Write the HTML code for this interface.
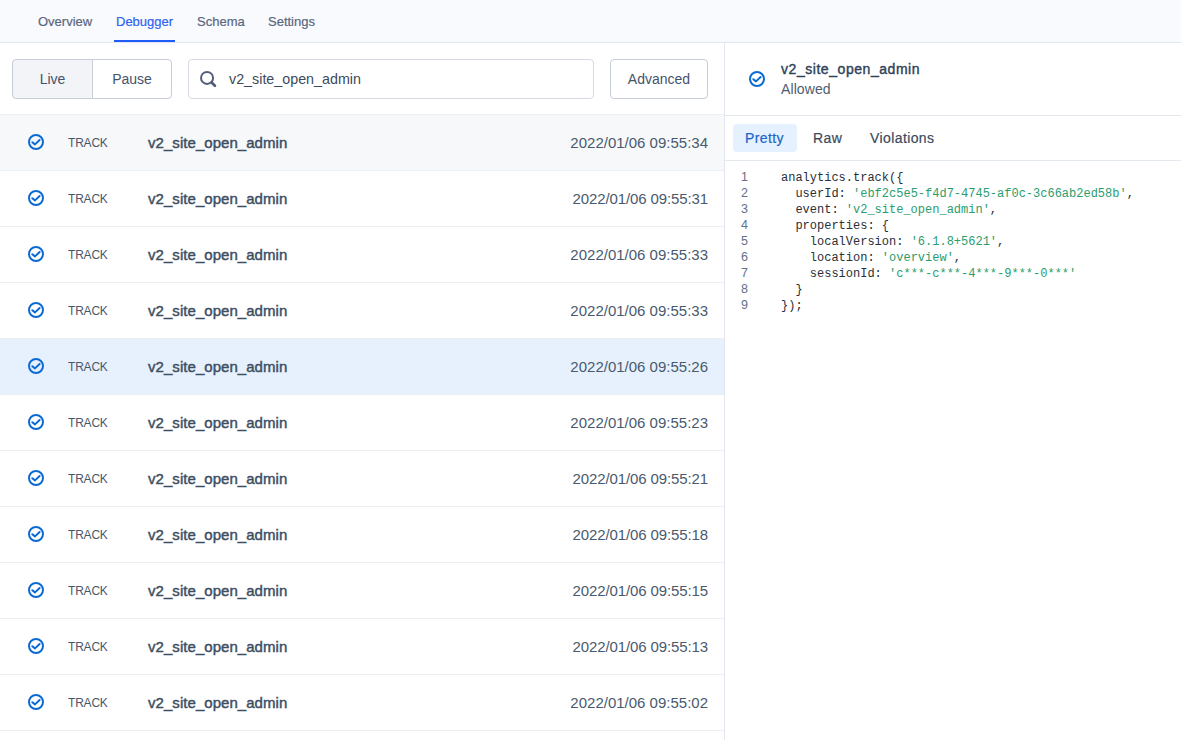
<!DOCTYPE html>
<html><head><meta charset="utf-8">
<style>
*{box-sizing:border-box;margin:0;padding:0}
html,body{width:1181px;height:740px;overflow:hidden;background:#fff;font-family:"Liberation Sans",sans-serif;color:#425466}
.nav{position:absolute;left:0;top:0;width:1181px;height:43px;background:#f9fafd;border-bottom:1px solid #e0e5f1}
.nav span{position:absolute;top:14px;font-size:13px;color:#596780;line-height:15px;-webkit-text-stroke:0.2px currentColor}
.nav .act{color:#2e63f2}
.nav .ul{position:absolute;left:114px;top:40px;width:61px;height:2px;background:#215cf6}
.vdiv{position:absolute;left:724px;top:43px;width:1px;height:697px;background:#e3e6f0}
.btn{position:absolute;top:59px;height:40px;border:1px solid #c6ccd8;font-size:14px;color:#45536a;line-height:38px;text-align:center;background:#fff}
.live{left:12px;width:81px;background:#f2f4f8;border-radius:4px 0 0 4px}
.pause{left:92px;width:80px;border-radius:0 4px 4px 0}
.adv{left:610px;width:98px;border-radius:4px}
.search{position:absolute;left:188px;top:59px;width:406px;height:40px;border:1px solid #d5dae3;border-radius:4px;background:#fff}
.sicon{position:absolute;left:10px;top:10px}
.stext{position:absolute;left:40px;top:10px;font-size:14.3px;line-height:18px;color:#3c4a5c}
.rowtop{position:absolute;left:0;top:114px;width:724px;height:1px;background:#ebeef2}
.row{position:absolute;left:0;width:724px;height:56px;border-bottom:1px solid #ebeef2}
.row .ty{position:absolute;left:68px;top:21px;font-size:12px;color:#48586c;line-height:14px;letter-spacing:-0.2px}
.row .nm{position:absolute;left:148px;top:19px;font-size:15px;color:#3d4e62;line-height:18px;letter-spacing:0.05px;-webkit-text-stroke:0.45px #3d4e62}
.row .ts{position:absolute;right:16px;top:19px;font-size:15px;color:#4a5a6e;line-height:18px}
.rp{position:absolute;left:725px;top:43px;width:456px;height:697px}
.rtitle{position:absolute;left:56px;top:18px;font-size:14px;color:#2e4259;line-height:17px;letter-spacing:0.55px;-webkit-text-stroke:0.4px #2e4259}
.rsub{position:absolute;left:56px;top:38px;font-size:14px;color:#4f5d73;line-height:17px;letter-spacing:0.1px}
.rhb{position:absolute;left:0;top:72px;width:456px;height:1px;background:#e3e8ee}
.tab{position:absolute;top:81px;height:28px;line-height:28px;font-size:14px;color:#3c4a5c;padding:0 12px;border-radius:4px;letter-spacing:0.4px;-webkit-text-stroke:0.2px currentColor}
.pretty{left:8px;width:64px;background:#e5f1fe;color:#1a66c9}
.raw{left:76px}
.viol{left:133px}
.tbb{position:absolute;left:0;top:117px;width:456px;height:1px;background:#e3e8ee}
.code{position:absolute;left:725px;top:169.5px;font-family:"Liberation Mono",monospace;font-size:12px;line-height:16px;color:#2a2f38}
.code div{position:relative;height:16px;white-space:pre}
.code .ln{position:absolute;left:16px;top:-1px;width:20px;color:#62718a;font-family:"Liberation Sans",sans-serif;font-size:12.5px}
.code .tx{position:absolute;left:56px}
.s{color:#2a9d6c}

</style></head><body>
<div class="nav">
  <span style="left:38px">Overview</span>
  <span class="act" style="left:116px">Debugger</span>
  <span style="left:197px">Schema</span>
  <span style="left:268px">Settings</span>
  <div class="ul"></div>
</div>
<div class="vdiv"></div>
<div class="bgroup">
<div class="btn live">Live</div>
<div class="btn pause">Pause</div>
</div>
<div class="search">
  <svg class="sicon" width="20" height="20" viewBox="0 0 20 20"><circle cx="8.05" cy="7.9" r="6" fill="none" stroke="#525d78" stroke-width="2"/><path d="M12.6 12.5L15.9 15.7" stroke="#525d78" stroke-width="2.7" stroke-linecap="round"/></svg>
  <span class="stext">v2_site_open_admin</span>
</div>
<div class="btn adv">Advanced</div>
<div class="rowtop"></div>
<div class="row" style="top:115px;background:#f7f8fa"><svg style="position:absolute;left:28px;top:19px" width="16" height="16" viewBox="0 0 16 16"><circle cx="8" cy="8" r="7" fill="none" stroke="#0b6bd3" stroke-width="2"/><path d="M4.3 8.2L7 10.4L11.6 6" fill="none" stroke="#0b6bd3" stroke-width="2" stroke-linecap="round" stroke-linejoin="round"/></svg><span class="ty">TRACK</span><span class="nm">v2_site_open_admin</span><span class="ts" style="letter-spacing:0px">2022/01/06 09:55:34</span></div>
<div class="row" style="top:171px;background:#fff"><svg style="position:absolute;left:28px;top:19px" width="16" height="16" viewBox="0 0 16 16"><circle cx="8" cy="8" r="7" fill="none" stroke="#0b6bd3" stroke-width="2"/><path d="M4.3 8.2L7 10.4L11.6 6" fill="none" stroke="#0b6bd3" stroke-width="2" stroke-linecap="round" stroke-linejoin="round"/></svg><span class="ty">TRACK</span><span class="nm">v2_site_open_admin</span><span class="ts" style="letter-spacing:-0.11px">2022/01/06 09:55:31</span></div>
<div class="row" style="top:227px;background:#fff"><svg style="position:absolute;left:28px;top:19px" width="16" height="16" viewBox="0 0 16 16"><circle cx="8" cy="8" r="7" fill="none" stroke="#0b6bd3" stroke-width="2"/><path d="M4.3 8.2L7 10.4L11.6 6" fill="none" stroke="#0b6bd3" stroke-width="2" stroke-linecap="round" stroke-linejoin="round"/></svg><span class="ty">TRACK</span><span class="nm">v2_site_open_admin</span><span class="ts" style="letter-spacing:0px">2022/01/06 09:55:33</span></div>
<div class="row" style="top:283px;background:#fff"><svg style="position:absolute;left:28px;top:19px" width="16" height="16" viewBox="0 0 16 16"><circle cx="8" cy="8" r="7" fill="none" stroke="#0b6bd3" stroke-width="2"/><path d="M4.3 8.2L7 10.4L11.6 6" fill="none" stroke="#0b6bd3" stroke-width="2" stroke-linecap="round" stroke-linejoin="round"/></svg><span class="ty">TRACK</span><span class="nm">v2_site_open_admin</span><span class="ts" style="letter-spacing:0px">2022/01/06 09:55:33</span></div>
<div class="row" style="top:339px;background:#e6f1fd"><svg style="position:absolute;left:28px;top:19px" width="16" height="16" viewBox="0 0 16 16"><circle cx="8" cy="8" r="7" fill="none" stroke="#0b6bd3" stroke-width="2"/><path d="M4.3 8.2L7 10.4L11.6 6" fill="none" stroke="#0b6bd3" stroke-width="2" stroke-linecap="round" stroke-linejoin="round"/></svg><span class="ty">TRACK</span><span class="nm">v2_site_open_admin</span><span class="ts" style="letter-spacing:0px">2022/01/06 09:55:26</span></div>
<div class="row" style="top:395px;background:#fff"><svg style="position:absolute;left:28px;top:19px" width="16" height="16" viewBox="0 0 16 16"><circle cx="8" cy="8" r="7" fill="none" stroke="#0b6bd3" stroke-width="2"/><path d="M4.3 8.2L7 10.4L11.6 6" fill="none" stroke="#0b6bd3" stroke-width="2" stroke-linecap="round" stroke-linejoin="round"/></svg><span class="ty">TRACK</span><span class="nm">v2_site_open_admin</span><span class="ts" style="letter-spacing:0px">2022/01/06 09:55:23</span></div>
<div class="row" style="top:451px;background:#fff"><svg style="position:absolute;left:28px;top:19px" width="16" height="16" viewBox="0 0 16 16"><circle cx="8" cy="8" r="7" fill="none" stroke="#0b6bd3" stroke-width="2"/><path d="M4.3 8.2L7 10.4L11.6 6" fill="none" stroke="#0b6bd3" stroke-width="2" stroke-linecap="round" stroke-linejoin="round"/></svg><span class="ty">TRACK</span><span class="nm">v2_site_open_admin</span><span class="ts" style="letter-spacing:-0.11px">2022/01/06 09:55:21</span></div>
<div class="row" style="top:507px;background:#fff"><svg style="position:absolute;left:28px;top:19px" width="16" height="16" viewBox="0 0 16 16"><circle cx="8" cy="8" r="7" fill="none" stroke="#0b6bd3" stroke-width="2"/><path d="M4.3 8.2L7 10.4L11.6 6" fill="none" stroke="#0b6bd3" stroke-width="2" stroke-linecap="round" stroke-linejoin="round"/></svg><span class="ty">TRACK</span><span class="nm">v2_site_open_admin</span><span class="ts" style="letter-spacing:-0.11px">2022/01/06 09:55:18</span></div>
<div class="row" style="top:563px;background:#fff"><svg style="position:absolute;left:28px;top:19px" width="16" height="16" viewBox="0 0 16 16"><circle cx="8" cy="8" r="7" fill="none" stroke="#0b6bd3" stroke-width="2"/><path d="M4.3 8.2L7 10.4L11.6 6" fill="none" stroke="#0b6bd3" stroke-width="2" stroke-linecap="round" stroke-linejoin="round"/></svg><span class="ty">TRACK</span><span class="nm">v2_site_open_admin</span><span class="ts" style="letter-spacing:-0.11px">2022/01/06 09:55:15</span></div>
<div class="row" style="top:619px;background:#fff"><svg style="position:absolute;left:28px;top:19px" width="16" height="16" viewBox="0 0 16 16"><circle cx="8" cy="8" r="7" fill="none" stroke="#0b6bd3" stroke-width="2"/><path d="M4.3 8.2L7 10.4L11.6 6" fill="none" stroke="#0b6bd3" stroke-width="2" stroke-linecap="round" stroke-linejoin="round"/></svg><span class="ty">TRACK</span><span class="nm">v2_site_open_admin</span><span class="ts" style="letter-spacing:-0.11px">2022/01/06 09:55:13</span></div>
<div class="row" style="top:675px;background:#fff"><svg style="position:absolute;left:28px;top:19px" width="16" height="16" viewBox="0 0 16 16"><circle cx="8" cy="8" r="7" fill="none" stroke="#0b6bd3" stroke-width="2"/><path d="M4.3 8.2L7 10.4L11.6 6" fill="none" stroke="#0b6bd3" stroke-width="2" stroke-linecap="round" stroke-linejoin="round"/></svg><span class="ty">TRACK</span><span class="nm">v2_site_open_admin</span><span class="ts" style="letter-spacing:0px">2022/01/06 09:55:02</span></div>
<div class="rp">
  <svg style="position:absolute;left:24px;top:28px" width="16" height="16" viewBox="0 0 16 16"><circle cx="8" cy="8" r="7" fill="none" stroke="#0b6bd3" stroke-width="2"/><path d="M4.3 8.2L7 10.4L11.6 6" fill="none" stroke="#0b6bd3" stroke-width="2" stroke-linecap="round" stroke-linejoin="round"/></svg>
  <div class="rtitle">v2_site_open_admin</div>
  <div class="rsub">Allowed</div>
  <div class="rhb"></div>
  <div class="tab pretty">Pretty</div>
  <div class="tab raw">Raw</div>
  <div class="tab viol">Violations</div>
  <div class="tbb"></div>
</div>
<div class="code">
<div><span class="ln">1</span><span class="tx">analytics.track({</span></div>
<div><span class="ln">2</span><span class="tx">  userId: <span class=s>'ebf2c5e5-f4d7-4745-af0c-3c66ab2ed58b'</span>,</span></div>
<div><span class="ln">3</span><span class="tx">  event: <span class=s>'v2_site_open_admin'</span>,</span></div>
<div><span class="ln">4</span><span class="tx">  properties: {</span></div>
<div><span class="ln">5</span><span class="tx">    localVersion: <span class=s>'6.1.8+5621'</span>,</span></div>
<div><span class="ln">6</span><span class="tx">    location: <span class=s>'overview'</span>,</span></div>
<div><span class="ln">7</span><span class="tx">    sessionId: <span class=s>'c***-c***-4***-9***-0***'</span></span></div>
<div><span class="ln">8</span><span class="tx">  }</span></div>
<div><span class="ln">9</span><span class="tx">});</span></div>
</div>
</body></html>
